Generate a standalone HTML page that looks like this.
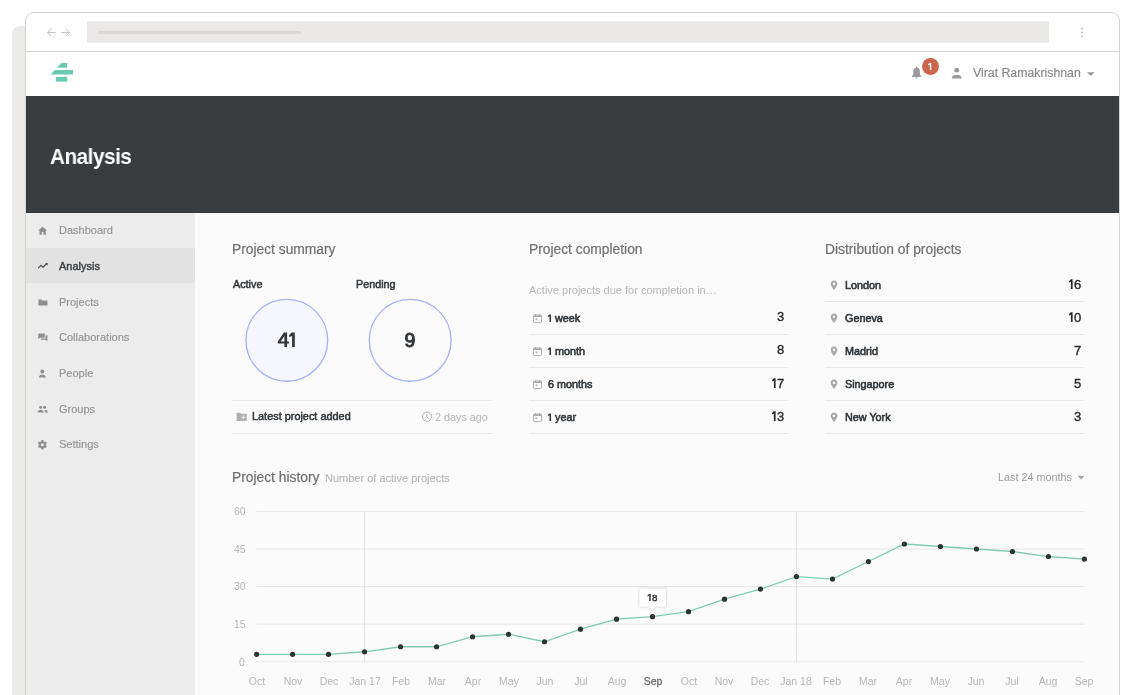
<!DOCTYPE html>
<html><head><meta charset="utf-8"><style>
html,body{margin:0;padding:0;width:1130px;height:695px;overflow:hidden;background:#fff;}
body{position:relative;font-family:"Liberation Sans", sans-serif;}
.t{position:absolute;line-height:1;white-space:nowrap;will-change:transform;}
.a{position:absolute;}
</style></head><body>
<div class="a" style="left:12px;top:26px;width:40px;height:700px;background:#ebeae8;border-radius:8px 0 0 0;"></div>
<div class="a" style="left:25.3px;top:12px;width:1094.5px;height:720px;border-radius:9px 9px 0 0;background:#fff;"></div>
<div class="a" style="left:26px;top:50.6px;width:1093px;height:1.3px;background:#d3d3d3;"></div>
<div class="a" style="left:87.4px;top:21px;width:961.6px;height:22.2px;background:#eae9e7;"></div>
<div class="a" style="left:97.6px;top:31px;width:203.3px;height:3px;background:#dad9d7;border-radius:2px;"></div>
<svg class="a" style="left:44px;top:26px" width="30" height="14" viewBox="0 0 30 14">
<g fill="none" stroke="#c4c4c4" stroke-width="1" stroke-linecap="round" stroke-linejoin="round">
<path d="M3.5 6.5 H11.5 M7 3 L3.5 6.5 L7 10"/>
<path d="M17.5 6.5 H25.5 M22 3 L25.5 6.5 L22 10"/>
</g></svg>
<svg class="a" style="left:1079px;top:25px" width="6" height="16" viewBox="0 0 6 16">
<g fill="#bdbdbd"><circle cx="3.2" cy="3.5" r="0.95"/><circle cx="3.2" cy="7.5" r="0.95"/><circle cx="3.2" cy="11.5" r="0.95"/></g></svg>
<svg class="a" style="left:40px;top:55px" width="50" height="35" viewBox="40 55 50 35">
<g fill="#68ccb5">
<polygon points="61.4,63.1 67.2,63.1 67.2,67.8 57.1,67.8"/>
<polygon points="54.6,70 73,70 73,74.6 50.8,74.6"/>
<rect x="55.9" y="76.9" width="11.3" height="4.7"/>
</g></svg>
<svg class="a" style="left:908px;top:62px" width="18" height="20" viewBox="0 0 18 20">
<path fill="#9a9a9a" d="M8.6 4.6c-0.5 0-0.8 0.4-0.8 0.9v0.3c-1.6 0.5-2.5 1.9-2.5 3.6v3.3L4 14v0.9h9.2V14l-1.3-1.3V9.4c0-1.7-0.9-3.1-2.5-3.6v-0.3c0-0.5-0.3-0.9-0.8-0.9z M7.4 15.6h2.4c0 0.7-0.5 1.2-1.2 1.2s-1.2-0.5-1.2-1.2z"/>
</svg>
<div class="a" style="left:922px;top:58.2px;width:16.8px;height:16.8px;border-radius:50%;background:#cb654c;"></div>
<svg class="a" style="left:920px;top:56px" width="20" height="20" viewBox="920 56 20 20"><path fill="#fff" d="M929.7 63h1.6v7.1h-1.5v-5.3l-1.6 0.6v-1.3z"/></svg>
<svg class="a" style="left:950px;top:66px" width="14" height="14" viewBox="0 0 14 14">
<g fill="#9a9a9a"><circle cx="6.7" cy="4.2" r="2.4"/><path d="M1.8 11.7c0-2 2.6-3 4.9-3s4.9 1 4.9 3v0.8H1.8z"/></g></svg>
<div class="t" style="left:973.00px;top:66.89px;font-size:12.3px;font-weight:400;color:#888888;-webkit-text-stroke:0.15px #888888;">Virat Ramakrishnan</div>
<svg class="a" style="left:1086px;top:71px" width="10" height="6" viewBox="0 0 10 6"><path fill="#9a9a9a" d="M1 1.3h7.6L4.8 5z"/></svg>
<div class="a" style="left:26px;top:96px;width:1093px;height:117px;background:#383c3f;"></div>
<div class="t" style="left:50.30px;top:145.68px;font-size:22px;font-weight:700;color:#fff;letter-spacing:-0.5px;transform:scaleX(0.94);transform-origin:0 0;">Analysis</div>
<div class="a" style="left:26px;top:213px;width:169px;height:490px;background:#ececec;"></div>
<div class="a" style="left:26px;top:248px;width:169px;height:35px;background:#e2e2e2;"></div>
<div class="a" style="left:195px;top:213px;width:924px;height:490px;background:#fbfbfb;"></div>
<div class="t" style="left:58.50px;top:224.99px;font-size:11px;font-weight:400;color:#939393;-webkit-text-stroke:0.15px #939393;">Dashboard</div>
<div class="t" style="left:58.90px;top:260.99px;font-size:11px;font-weight:400;color:#3b3f42;-webkit-text-stroke:0.4px #3b3f42;">Analysis</div>
<div class="t" style="left:58.50px;top:296.99px;font-size:11px;font-weight:400;color:#939393;-webkit-text-stroke:0.15px #939393;">Projects</div>
<div class="t" style="left:58.50px;top:331.99px;font-size:11px;font-weight:400;color:#939393;-webkit-text-stroke:0.15px #939393;">Collaborations</div>
<div class="t" style="left:58.50px;top:367.99px;font-size:11px;font-weight:400;color:#939393;-webkit-text-stroke:0.15px #939393;">People</div>
<div class="t" style="left:58.50px;top:403.99px;font-size:11px;font-weight:400;color:#939393;-webkit-text-stroke:0.15px #939393;">Groups</div>
<div class="t" style="left:58.50px;top:438.99px;font-size:11px;font-weight:400;color:#939393;-webkit-text-stroke:0.15px #939393;">Settings</div>
<svg class="a" style="left:36px;top:224px" width="14" height="14" viewBox="0 0 14 14"><path fill="#8f8f8f" d="M6.5 2.7L2.2 6.6h1.3v4.2h2.3V8h1.7v2.8h2.3V6.6h1.3z"/></svg>
<svg class="a" style="left:36px;top:259px" width="14" height="14" viewBox="0 0 14 14"><path fill="none" stroke="#3b3f42" stroke-width="1.1" d="M2.2 9.2L5 6.4l2 1.8 3.6-3.6"/><path fill="#3b3f42" d="M9.2 4.1h2.4v2.4z"/></svg>
<svg class="a" style="left:36px;top:295px" width="14" height="14" viewBox="0 0 14 14"><path fill="#8f8f8f" d="M2.4 4.6h3.2l1 1h4.9v4.8H2.4z"/></svg>
<svg class="a" style="left:36px;top:330px" width="14" height="14" viewBox="0 0 14 14"><path fill="#8f8f8f" d="M2.3 3.5h6.4v4.3H4.1L2.3 9.3z M9.5 5.3h1.9v6.1L9.7 9.7H4.9V8.6h4.6z"/></svg>
<svg class="a" style="left:36px;top:366px" width="14" height="14" viewBox="0 0 14 14"><g fill="#8f8f8f"><circle cx="6.3" cy="5.6" r="2"/><path d="M2.8 11.2c0-1.7 2.2-2.8 3.5-2.8s3.5 1.1 3.5 2.8v0.3H2.8z"/></g></svg>
<svg class="a" style="left:36px;top:401px" width="14" height="14" viewBox="0 0 14 14"><g fill="#8f8f8f"><circle cx="4.6" cy="6.3" r="1.5"/><circle cx="8.6" cy="6.3" r="1.5"/><path d="M1.5 11.2c0-1.4 1.9-2.4 3.1-2.4s3.1 1 3.1 2.4v0.2H1.5z M8.3 8.8c0.1 0 0.2 0 0.3 0 1.4 0 3.2 0.9 3.2 2.2v0.4H8.9v-0.4c0-0.9-0.2-1.6-0.6-2.2z"/></g></svg>
<svg class="a" style="left:36px;top:437px" width="14" height="14" viewBox="0 0 14 14"><g transform="translate(6.4 7.7)" fill="#8f8f8f"><circle r="3.5"/><rect x="-1.15" y="-4.7" width="2.3" height="3" rx="0.6" transform="rotate(0)"/><rect x="-1.15" y="-4.7" width="2.3" height="3" rx="0.6" transform="rotate(60)"/><rect x="-1.15" y="-4.7" width="2.3" height="3" rx="0.6" transform="rotate(120)"/><rect x="-1.15" y="-4.7" width="2.3" height="3" rx="0.6" transform="rotate(180)"/><rect x="-1.15" y="-4.7" width="2.3" height="3" rx="0.6" transform="rotate(240)"/><rect x="-1.15" y="-4.7" width="2.3" height="3" rx="0.6" transform="rotate(300)"/></g><circle cx="6.4" cy="7.7" r="1.5" fill="#ececec"/></svg>
<div class="t" style="left:232.10px;top:242.62px;font-size:13.8px;font-weight:400;color:#6f6f6f;-webkit-text-stroke:0.2px #6f6f6f;">Project summary</div>
<div class="t" style="left:232.60px;top:279.16px;font-size:10.8px;font-weight:400;color:#33373a;-webkit-text-stroke:0.5px #33373a;">Active</div>
<div class="t" style="left:356.00px;top:279.16px;font-size:10.8px;font-weight:400;color:#33373a;-webkit-text-stroke:0.5px #33373a;">Pending</div>
<svg class="a" style="left:230px;top:290px" width="240" height="100" viewBox="230 290 240 100"><circle cx="286.8" cy="340.3" r="40.9" fill="#f5f6fe" stroke="#a9b2f4" stroke-width="1.35"/><circle cx="410.2" cy="340.3" r="40.9" fill="#fbfbfb" stroke="#a9b2f4" stroke-width="1.35"/></svg>
<svg class="a" style="left:270px;top:325px" width="35" height="30" viewBox="270 325 35 30"><path fill="#33373a" fill-rule="evenodd" d="M283.9 332.5h3.2v8.9h1.9v2.1h-1.9v3.5h-2.7v-3.5h-6.6v-1.9z M280.7 341.4h3.7v-5.4z M291.5 332.4h3.3v14.6h-2.7v-10.9l-2.9 1.1v-2.2z"/></svg>
<div class="t" style="left:210.20px;width:400px;text-align:center;top:330.79px;font-size:19.5px;font-weight:400;color:#33373a;-webkit-text-stroke:1.0px #33373a;">9</div>
<div class="a" style="left:232px;top:399.8px;width:259.5px;height:1px;background:#e6e6e6;"></div>
<div class="a" style="left:232px;top:432.8px;width:259.5px;height:1px;background:#e6e6e6;"></div>
<svg class="a" style="left:235px;top:411px" width="14" height="12" viewBox="0 0 14 12"><path fill="#b0b0b0" d="M1.6 1.8h3.6l1 1h5.5v7.2H1.6z"/><path fill="#fafafa" d="M7.9 4.7h0.9v1.3h1.3v0.9H8.8v1.3H7.9V6.9H6.6V6h1.3z"/></svg>
<div class="t" style="left:251.90px;top:411.07px;font-size:10.9px;font-weight:400;color:#33373a;-webkit-text-stroke:0.5px #33373a;">Latest project added</div>
<svg class="a" style="left:420px;top:411px" width="14" height="12" viewBox="0 0 14 12"><g fill="none" stroke="#b3b3b3" stroke-width="1"><circle cx="7" cy="5.7" r="4.6"/><path d="M6.8 3.2v2.8l1.8 1.5"/></g></svg>
<div class="t" style="right:642.10px;top:412.16px;font-size:10.8px;font-weight:400;color:#b6b6b6;">2 days ago</div>
<div class="t" style="left:528.50px;top:242.62px;font-size:13.8px;font-weight:400;color:#6f6f6f;-webkit-text-stroke:0.2px #6f6f6f;">Project completion</div>
<div class="t" style="left:529.00px;top:284.99px;font-size:11px;font-weight:400;color:#b6b6b6;">Active projects due for completion in…</div>
<svg class="a" style="left:532.0px;top:312.50px" width="11" height="11" viewBox="0 0 11 11"><g fill="none" stroke="#a8a8a8" stroke-width="0.9"><rect x="1.5" y="2" width="8" height="7.6" rx="0.8"/></g><path fill="#a8a8a8" d="M1.5 2.5h8v1.6h-8z M3 1h0.9v1.5H3z M7.1 1h0.9v1.5H7.1z M3.6 5.4h1.7v1.7H3.6z"/></svg>
<svg class="a" style="left:0;top:0;overflow:visible" width="1" height="1"><path fill="#33373a" d="M549.5 314.50h1.5v7.5h-1.5v-5.6l-1.6 0.6v-1.3z"/></svg>
<div class="t" style="left:555.00px;top:313.16px;font-size:10.8px;font-weight:400;color:#33373a;-webkit-text-stroke:0.6px #33373a;">week</div>
<div class="t" style="right:346.30px;top:310.30px;font-size:13px;font-weight:400;color:#26292c;letter-spacing:-0.5px;-webkit-text-stroke:0.35px #26292c;">3</div>
<div class="a" style="left:529px;top:333.80px;width:259px;height:1px;background:#e6e6e6;"></div>
<svg class="a" style="left:532.0px;top:345.55px" width="11" height="11" viewBox="0 0 11 11"><g fill="none" stroke="#a8a8a8" stroke-width="0.9"><rect x="1.5" y="2" width="8" height="7.6" rx="0.8"/></g><path fill="#a8a8a8" d="M1.5 2.5h8v1.6h-8z M3 1h0.9v1.5H3z M7.1 1h0.9v1.5H7.1z M3.6 5.4h1.7v1.7H3.6z"/></svg>
<svg class="a" style="left:0;top:0;overflow:visible" width="1" height="1"><path fill="#33373a" d="M549.5 347.50h1.5v7.5h-1.5v-5.6l-1.6 0.6v-1.3z"/></svg>
<div class="t" style="left:555.00px;top:346.16px;font-size:10.8px;font-weight:400;color:#33373a;-webkit-text-stroke:0.6px #33373a;">month</div>
<div class="t" style="right:346.30px;top:343.30px;font-size:13px;font-weight:400;color:#26292c;letter-spacing:-0.5px;-webkit-text-stroke:0.35px #26292c;">8</div>
<div class="a" style="left:529px;top:366.85px;width:259px;height:1px;background:#e6e6e6;"></div>
<svg class="a" style="left:532.0px;top:378.60px" width="11" height="11" viewBox="0 0 11 11"><g fill="none" stroke="#a8a8a8" stroke-width="0.9"><rect x="1.5" y="2" width="8" height="7.6" rx="0.8"/></g><path fill="#a8a8a8" d="M1.5 2.5h8v1.6h-8z M3 1h0.9v1.5H3z M7.1 1h0.9v1.5H7.1z M3.6 5.4h1.7v1.7H3.6z"/></svg>
<div class="t" style="left:547.80px;top:379.16px;font-size:10.8px;font-weight:400;color:#33373a;-webkit-text-stroke:0.6px #33373a;">6 months</div>
<div class="t" style="right:346.30px;top:377.30px;font-size:13px;font-weight:400;color:#26292c;letter-spacing:-0.5px;-webkit-text-stroke:0.35px #26292c;">7</div>
<svg class="a" style="left:0;top:0;overflow:visible" width="1" height="1"><path fill="#26292c" d="M773.90 378.30h1.7v9.7h-1.7v-7.3l-1.8 0.7v-1.5z"/></svg>
<div class="a" style="left:529px;top:399.90px;width:259px;height:1px;background:#e6e6e6;"></div>
<svg class="a" style="left:532.0px;top:411.65px" width="11" height="11" viewBox="0 0 11 11"><g fill="none" stroke="#a8a8a8" stroke-width="0.9"><rect x="1.5" y="2" width="8" height="7.6" rx="0.8"/></g><path fill="#a8a8a8" d="M1.5 2.5h8v1.6h-8z M3 1h0.9v1.5H3z M7.1 1h0.9v1.5H7.1z M3.6 5.4h1.7v1.7H3.6z"/></svg>
<svg class="a" style="left:0;top:0;overflow:visible" width="1" height="1"><path fill="#33373a" d="M549.5 413.50h1.5v7.5h-1.5v-5.6l-1.6 0.6v-1.3z"/></svg>
<div class="t" style="left:555.00px;top:412.16px;font-size:10.8px;font-weight:400;color:#33373a;-webkit-text-stroke:0.6px #33373a;">year</div>
<div class="t" style="right:346.30px;top:410.30px;font-size:13px;font-weight:400;color:#26292c;letter-spacing:-0.5px;-webkit-text-stroke:0.35px #26292c;">3</div>
<svg class="a" style="left:0;top:0;overflow:visible" width="1" height="1"><path fill="#26292c" d="M773.90 411.30h1.7v9.7h-1.7v-7.3l-1.8 0.7v-1.5z"/></svg>
<div class="a" style="left:529px;top:432.95px;width:259px;height:1px;background:#e6e6e6;"></div>
<div class="t" style="left:824.50px;top:242.62px;font-size:13.8px;font-weight:400;color:#6f6f6f;-webkit-text-stroke:0.2px #6f6f6f;">Distribution of projects</div>
<svg class="a" style="left:829px;top:279.90px" width="10" height="11" viewBox="0 0 10 11"><path fill="#a8a8a8" fill-rule="evenodd" d="M5 0.6c-1.9 0-3.3 1.4-3.3 3.2 0 2.2 3.3 6.3 3.3 6.3s3.3-4.1 3.3-6.3C8.3 2 6.9 0.6 5 0.6z M5 2.5a1.3 1.3 0 1 0 0.001 0z"/></svg>
<div class="t" style="left:844.70px;top:280.16px;font-size:10.8px;font-weight:400;color:#33373a;-webkit-text-stroke:0.6px #33373a;">London</div>
<div class="t" style="right:49.30px;top:278.30px;font-size:13px;font-weight:400;color:#26292c;letter-spacing:-0.5px;-webkit-text-stroke:0.35px #26292c;">6</div>
<svg class="a" style="left:0;top:0;overflow:visible" width="1" height="1"><path fill="#26292c" d="M1070.90 279.30h1.7v9.7h-1.7v-7.3l-1.8 0.7v-1.5z"/></svg>
<div class="a" style="left:825px;top:301.00px;width:259.4px;height:1px;background:#e6e6e6;"></div>
<svg class="a" style="left:829px;top:312.95px" width="10" height="11" viewBox="0 0 10 11"><path fill="#a8a8a8" fill-rule="evenodd" d="M5 0.6c-1.9 0-3.3 1.4-3.3 3.2 0 2.2 3.3 6.3 3.3 6.3s3.3-4.1 3.3-6.3C8.3 2 6.9 0.6 5 0.6z M5 2.5a1.3 1.3 0 1 0 0.001 0z"/></svg>
<div class="t" style="left:844.70px;top:313.16px;font-size:10.8px;font-weight:400;color:#33373a;-webkit-text-stroke:0.6px #33373a;">Geneva</div>
<div class="t" style="right:49.30px;top:311.30px;font-size:13px;font-weight:400;color:#26292c;letter-spacing:-0.5px;-webkit-text-stroke:0.35px #26292c;">0</div>
<svg class="a" style="left:0;top:0;overflow:visible" width="1" height="1"><path fill="#26292c" d="M1070.90 312.30h1.7v9.7h-1.7v-7.3l-1.8 0.7v-1.5z"/></svg>
<div class="a" style="left:825px;top:334.05px;width:259.4px;height:1px;background:#e6e6e6;"></div>
<svg class="a" style="left:829px;top:346.00px" width="10" height="11" viewBox="0 0 10 11"><path fill="#a8a8a8" fill-rule="evenodd" d="M5 0.6c-1.9 0-3.3 1.4-3.3 3.2 0 2.2 3.3 6.3 3.3 6.3s3.3-4.1 3.3-6.3C8.3 2 6.9 0.6 5 0.6z M5 2.5a1.3 1.3 0 1 0 0.001 0z"/></svg>
<div class="t" style="left:844.70px;top:346.16px;font-size:10.8px;font-weight:400;color:#33373a;-webkit-text-stroke:0.6px #33373a;">Madrid</div>
<div class="t" style="right:49.30px;top:344.30px;font-size:13px;font-weight:400;color:#26292c;letter-spacing:-0.5px;-webkit-text-stroke:0.35px #26292c;">7</div>
<div class="a" style="left:825px;top:367.10px;width:259.4px;height:1px;background:#e6e6e6;"></div>
<svg class="a" style="left:829px;top:379.05px" width="10" height="11" viewBox="0 0 10 11"><path fill="#a8a8a8" fill-rule="evenodd" d="M5 0.6c-1.9 0-3.3 1.4-3.3 3.2 0 2.2 3.3 6.3 3.3 6.3s3.3-4.1 3.3-6.3C8.3 2 6.9 0.6 5 0.6z M5 2.5a1.3 1.3 0 1 0 0.001 0z"/></svg>
<div class="t" style="left:844.70px;top:379.16px;font-size:10.8px;font-weight:400;color:#33373a;-webkit-text-stroke:0.6px #33373a;">Singapore</div>
<div class="t" style="right:49.30px;top:377.30px;font-size:13px;font-weight:400;color:#26292c;letter-spacing:-0.5px;-webkit-text-stroke:0.35px #26292c;">5</div>
<div class="a" style="left:825px;top:400.15px;width:259.4px;height:1px;background:#e6e6e6;"></div>
<svg class="a" style="left:829px;top:412.10px" width="10" height="11" viewBox="0 0 10 11"><path fill="#a8a8a8" fill-rule="evenodd" d="M5 0.6c-1.9 0-3.3 1.4-3.3 3.2 0 2.2 3.3 6.3 3.3 6.3s3.3-4.1 3.3-6.3C8.3 2 6.9 0.6 5 0.6z M5 2.5a1.3 1.3 0 1 0 0.001 0z"/></svg>
<div class="t" style="left:844.70px;top:412.16px;font-size:10.8px;font-weight:400;color:#33373a;-webkit-text-stroke:0.6px #33373a;">New York</div>
<div class="t" style="right:49.30px;top:410.30px;font-size:13px;font-weight:400;color:#26292c;letter-spacing:-0.5px;-webkit-text-stroke:0.35px #26292c;">3</div>
<div class="a" style="left:825px;top:433.20px;width:259.4px;height:1px;background:#e6e6e6;"></div>
<div class="t" style="left:232.40px;top:470.62px;font-size:13.8px;font-weight:400;color:#6f6f6f;-webkit-text-stroke:0.2px #6f6f6f;">Project history</div>
<div class="t" style="left:325.20px;top:472.99px;font-size:11px;font-weight:400;color:#b6b6b6;-webkit-text-stroke:0.1px #b6b6b6;">Number of active projects</div>
<div class="t" style="right:58.20px;top:472.16px;font-size:10.8px;font-weight:400;color:#9c9c9c;">Last 24 months</div>
<svg class="a" style="left:1076px;top:474px" width="10" height="7" viewBox="0 0 10 7"><path fill="#a6a6a6" d="M1.8 1.8h6.6L5.1 5.8z"/></svg>
<svg class="a" style="left:0;top:0" width="1130" height="695" viewBox="0 0 1130 695">
<line x1="256.6" y1="661.80" x2="1084.4" y2="661.80" stroke="#e6e6e6" stroke-width="1"/>
<line x1="256.6" y1="624.20" x2="1084.4" y2="624.20" stroke="#e6e6e6" stroke-width="1"/>
<line x1="256.6" y1="586.60" x2="1084.4" y2="586.60" stroke="#e6e6e6" stroke-width="1"/>
<line x1="256.6" y1="549.00" x2="1084.4" y2="549.00" stroke="#e6e6e6" stroke-width="1"/>
<line x1="256.6" y1="511.40" x2="1084.4" y2="511.40" stroke="#e6e6e6" stroke-width="1"/>
<line x1="364.57" y1="511.4" x2="364.57" y2="661.8" stroke="#e2e2e2" stroke-width="1"/>
<line x1="796.47" y1="511.4" x2="796.47" y2="661.8" stroke="#e2e2e2" stroke-width="1"/>
<polyline points="256.60,654.28 292.59,654.28 328.58,654.28 364.57,651.77 400.57,646.76 436.56,646.76 472.55,636.73 508.54,634.23 544.53,641.75 580.52,629.21 616.51,619.19 652.50,616.68 688.50,611.67 724.49,599.13 760.48,589.11 796.47,576.57 832.46,579.08 868.45,561.53 904.44,543.99 940.43,546.49 976.43,549.00 1012.42,551.51 1048.41,556.52 1084.40,559.03" fill="none" stroke="#80cbb2" stroke-width="1.3"/>
<circle cx="256.60" cy="654.28" r="2.6" fill="#2e3235"/>
<circle cx="292.59" cy="654.28" r="2.6" fill="#2e3235"/>
<circle cx="328.58" cy="654.28" r="2.6" fill="#2e3235"/>
<circle cx="364.57" cy="651.77" r="2.6" fill="#2e3235"/>
<circle cx="400.57" cy="646.76" r="2.6" fill="#2e3235"/>
<circle cx="436.56" cy="646.76" r="2.6" fill="#2e3235"/>
<circle cx="472.55" cy="636.73" r="2.6" fill="#2e3235"/>
<circle cx="508.54" cy="634.23" r="2.6" fill="#2e3235"/>
<circle cx="544.53" cy="641.75" r="2.6" fill="#2e3235"/>
<circle cx="580.52" cy="629.21" r="2.6" fill="#2e3235"/>
<circle cx="616.51" cy="619.19" r="2.6" fill="#2e3235"/>
<circle cx="652.50" cy="616.68" r="2.6" fill="#2e3235"/>
<circle cx="688.50" cy="611.67" r="2.6" fill="#2e3235"/>
<circle cx="724.49" cy="599.13" r="2.6" fill="#2e3235"/>
<circle cx="760.48" cy="589.11" r="2.6" fill="#2e3235"/>
<circle cx="796.47" cy="576.57" r="2.6" fill="#2e3235"/>
<circle cx="832.46" cy="579.08" r="2.6" fill="#2e3235"/>
<circle cx="868.45" cy="561.53" r="2.6" fill="#2e3235"/>
<circle cx="904.44" cy="543.99" r="2.6" fill="#2e3235"/>
<circle cx="940.43" cy="546.49" r="2.6" fill="#2e3235"/>
<circle cx="976.43" cy="549.00" r="2.6" fill="#2e3235"/>
<circle cx="1012.42" cy="551.51" r="2.6" fill="#2e3235"/>
<circle cx="1048.41" cy="556.52" r="2.6" fill="#2e3235"/>
<circle cx="1084.40" cy="559.03" r="2.6" fill="#2e3235"/>
<path d="M640.4 588h24.6a1.5 1.5 0 0 1 1.5 1.5v16a1.5 1.5 0 0 1-1.5 1.5h-9.3l-3.2 3.8-3.2-3.8h-8.9a1.5 1.5 0 0 1-1.5-1.5v-16a1.5 1.5 0 0 1 1.5-1.5z" fill="#fff" stroke="#e3e3e3" stroke-width="0.9" style="filter:drop-shadow(0 0.5px 1px rgba(0,0,0,0.06))"/>
</svg>
<svg class="a" style="left:640px;top:588px" width="20" height="20" viewBox="640 588 20 20"><path fill="#33373a" d="M649.1 593.9h1.6v7.1h-1.5v-5.2l-1.6 0.6v-1.3z"/></svg>
<div class="t" style="right:472.30px;top:593.00px;font-size:9.8px;font-weight:400;color:#33373a;-webkit-text-stroke:0.45px #33373a;">8</div>
<div class="t" style="right:884.80px;top:657.41px;font-size:10.5px;font-weight:400;color:#b6b6b6;">0</div>
<div class="t" style="right:884.80px;top:619.41px;font-size:10.5px;font-weight:400;color:#b6b6b6;">15</div>
<div class="t" style="right:884.80px;top:581.41px;font-size:10.5px;font-weight:400;color:#b6b6b6;">30</div>
<div class="t" style="right:884.80px;top:544.41px;font-size:10.5px;font-weight:400;color:#b6b6b6;">45</div>
<div class="t" style="right:884.80px;top:506.41px;font-size:10.5px;font-weight:400;color:#b6b6b6;">60</div>
<div class="t" style="left:56.60px;width:400px;text-align:center;top:676.41px;font-size:10.5px;font-weight:400;color:#b6b6b6;">Oct</div>
<div class="t" style="left:92.59px;width:400px;text-align:center;top:676.41px;font-size:10.5px;font-weight:400;color:#b6b6b6;">Nov</div>
<div class="t" style="left:128.58px;width:400px;text-align:center;top:676.41px;font-size:10.5px;font-weight:400;color:#b6b6b6;">Dec</div>
<div class="t" style="left:164.57px;width:400px;text-align:center;top:676.41px;font-size:10.5px;font-weight:400;color:#b6b6b6;">Jan 17</div>
<div class="t" style="left:200.57px;width:400px;text-align:center;top:676.41px;font-size:10.5px;font-weight:400;color:#b6b6b6;">Feb</div>
<div class="t" style="left:236.56px;width:400px;text-align:center;top:676.41px;font-size:10.5px;font-weight:400;color:#b6b6b6;">Mar</div>
<div class="t" style="left:272.55px;width:400px;text-align:center;top:676.41px;font-size:10.5px;font-weight:400;color:#b6b6b6;">Apr</div>
<div class="t" style="left:308.54px;width:400px;text-align:center;top:676.41px;font-size:10.5px;font-weight:400;color:#b6b6b6;">May</div>
<div class="t" style="left:344.53px;width:400px;text-align:center;top:676.41px;font-size:10.5px;font-weight:400;color:#b6b6b6;">Jun</div>
<div class="t" style="left:380.52px;width:400px;text-align:center;top:676.41px;font-size:10.5px;font-weight:400;color:#b6b6b6;">Jul</div>
<div class="t" style="left:416.51px;width:400px;text-align:center;top:676.41px;font-size:10.5px;font-weight:400;color:#b6b6b6;">Aug</div>
<div class="t" style="left:452.50px;width:400px;text-align:center;top:676.41px;font-size:10.5px;font-weight:400;color:#6a6a6a;-webkit-text-stroke:0.3px #6a6a6a;">Sep</div>
<div class="t" style="left:488.50px;width:400px;text-align:center;top:676.41px;font-size:10.5px;font-weight:400;color:#b6b6b6;">Oct</div>
<div class="t" style="left:524.49px;width:400px;text-align:center;top:676.41px;font-size:10.5px;font-weight:400;color:#b6b6b6;">Nov</div>
<div class="t" style="left:560.48px;width:400px;text-align:center;top:676.41px;font-size:10.5px;font-weight:400;color:#b6b6b6;">Dec</div>
<div class="t" style="left:596.47px;width:400px;text-align:center;top:676.41px;font-size:10.5px;font-weight:400;color:#b6b6b6;">Jan 18</div>
<div class="t" style="left:632.46px;width:400px;text-align:center;top:676.41px;font-size:10.5px;font-weight:400;color:#b6b6b6;">Feb</div>
<div class="t" style="left:668.45px;width:400px;text-align:center;top:676.41px;font-size:10.5px;font-weight:400;color:#b6b6b6;">Mar</div>
<div class="t" style="left:704.44px;width:400px;text-align:center;top:676.41px;font-size:10.5px;font-weight:400;color:#b6b6b6;">Apr</div>
<div class="t" style="left:740.43px;width:400px;text-align:center;top:676.41px;font-size:10.5px;font-weight:400;color:#b6b6b6;">May</div>
<div class="t" style="left:776.43px;width:400px;text-align:center;top:676.41px;font-size:10.5px;font-weight:400;color:#b6b6b6;">Jun</div>
<div class="t" style="left:812.42px;width:400px;text-align:center;top:676.41px;font-size:10.5px;font-weight:400;color:#b6b6b6;">Jul</div>
<div class="t" style="left:848.41px;width:400px;text-align:center;top:676.41px;font-size:10.5px;font-weight:400;color:#b6b6b6;">Aug</div>
<div class="t" style="left:884.40px;width:400px;text-align:center;top:676.41px;font-size:10.5px;font-weight:400;color:#b6b6b6;">Sep</div>
<div class="a" style="box-sizing:border-box;left:25.3px;top:12px;width:1094.5px;height:720px;border:1.7px solid #d2d2d2;border-radius:9px 9px 0 0;"></div>
</body></html>
